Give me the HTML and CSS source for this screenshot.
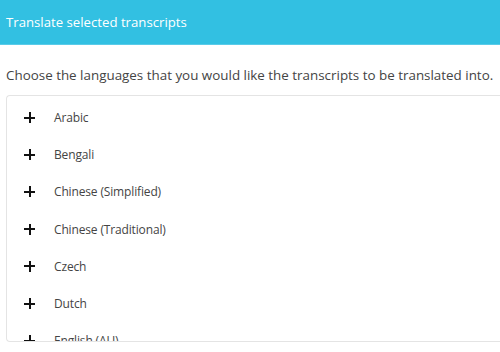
FILE: index.html
```html
<!DOCTYPE html>
<html>
<head>
<meta charset="utf-8">
<link rel="stylesheet" href="styles.css">
</head>
<body>
<div class="dialog">
  <div class="header">Translate selected transcripts</div>
  <div class="content">
    <p class="intro">Choose the languages that you would like the transcripts to be translated into.</p>
    <div class="list">
      <div class="row"><span class="plus"></span><span class="name">Arabic</span></div>
      <div class="row"><span class="plus"></span><span class="name">Bengali</span></div>
      <div class="row"><span class="plus"></span><span class="name">Chinese (Simplified)</span></div>
      <div class="row"><span class="plus"></span><span class="name">Chinese (Traditional)</span></div>
      <div class="row"><span class="plus"></span><span class="name">Czech</span></div>
      <div class="row"><span class="plus"></span><span class="name">Dutch</span></div>
      <div class="row"><span class="plus"></span><span class="name">English (AU)</span></div>
    </div>
  </div>
</div>
</body>
</html>
```
FILE: styles.css
```css
html, body {
  margin: 0;
  padding: 0;
  background: #fff;
  font-family: "Open Sans", "Noto Sans", sans-serif;
  color: #444;
}
.dialog {
  width: 500px;
  height: 352px;
  overflow: hidden;
}
.header {
  height: 45px;
  box-sizing: border-box;
  background: #32c0e2;
  border-bottom: 1px solid #5acbe8;
  color: #fff;
  font-size: 13.2px;
  line-height: 45px;
  padding-left: 6px;
}
.content {
  padding: 0 0 0 6px;
}
.intro {
  margin: 0;
  font-size: 13.4px;
  line-height: 20px;
  padding-top: 20px;
  padding-bottom: 10px;
  white-space: nowrap;
}
.list {
  border: 1px solid #e4e4e4;
  border-right: none;
  border-radius: 4px 0 0 4px;
  height: 247px;
  overflow: hidden;
  padding-top: 3px;
  box-sizing: border-box;
}
.row {
  height: 37.2px;
  display: flex;
  align-items: center;
  padding-left: 17px;
}
.plus {
  position: relative;
  width: 11px;
  height: 11px;
  margin-right: 19px;
  flex: none;
}
.plus::before, .plus::after {
  content: "";
  position: absolute;
  background: #111;
}
.plus::before {
  left: 0;
  top: 4.5px;
  width: 11px;
  height: 2px;
}
.plus::after {
  left: 4.5px;
  top: 0;
  width: 2px;
  height: 11px;
}
.name {
  font-size: 12px;
  letter-spacing: -0.15px;
  color: #444;
}
```
